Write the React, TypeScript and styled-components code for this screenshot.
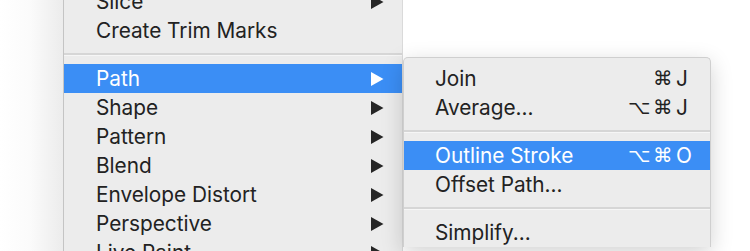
import * as React from 'react';
import styled, { createGlobalStyle } from 'styled-components';

const GlobalStyle = createGlobalStyle`
  html, body {
    margin: 0;
    padding: 0;
    background: #ffffff;
    overflow: hidden;
  }
  body {
    font-family: Inter, "Noto Sans", sans-serif;
  }
`;

type Item =
    | { kind: 'item'; label: string; mods?: string; keyChar?: string; sub?: boolean; active?: boolean }
    | { kind: 'sep' };

const mainItems: Item[] = [
    { kind: 'item', label: 'Slice', sub: true },
    { kind: 'item', label: 'Create Trim Marks' },
    { kind: 'sep' },
    { kind: 'item', label: 'Path', sub: true, active: true },
    { kind: 'item', label: 'Shape', sub: true },
    { kind: 'item', label: 'Pattern', sub: true },
    { kind: 'item', label: 'Blend', sub: true },
    { kind: 'item', label: 'Envelope Distort', sub: true },
    { kind: 'item', label: 'Perspective', sub: true },
    { kind: 'item', label: 'Live Paint', sub: true },
];

const pathItems: Item[] = [
    { kind: 'item', label: 'Join', mods: '⌘', keyChar: 'J' },
    { kind: 'item', label: 'Average...', mods: '⌥⌘', keyChar: 'J' },
    { kind: 'sep' },
    { kind: 'item', label: 'Outline Stroke', mods: '⌥⌘', keyChar: 'O', active: true },
    { kind: 'item', label: 'Offset Path...' },
    { kind: 'sep' },
    { kind: 'item', label: 'Simplify...' },
];

const Arrow = ({ active }: { active?: boolean }) => (
    <svg width="14" height="16" viewBox="0 0 14 16">
        <path d="M1 1 L13.5 8 L1 15 Z" fill={active ? '#ffffff' : '#262626'} />
    </svg>
);

function MenuRows({ items, arrows }: { items: Item[]; arrows: boolean }) {
    return <>
        {items.map((it, i) =>
            it.kind === 'sep'
                ? <Separator key={i} />
                : <Row key={i} active={it.active} indent={arrows ? 32 : 31}>
                    <Label>{it.label}</Label>
                    {arrows
                        ? <ArrowCell>{it.sub && <Arrow active={it.active} />}</ArrowCell>
                        : <>
                            <Mods>{it.mods}</Mods>
                            <KeyChar>{it.keyChar}</KeyChar>
                        </>}
                </Row>
        )}
    </>;
}

export default function App() {
    return <Page>
        <GlobalStyle />
        <Backdrop />
        <MainMenu>
            <MenuRows items={mainItems} arrows />
        </MainMenu>
        <SubMenu>
            <MenuRows items={pathItems} arrows={false} />
        </SubMenu>
    </Page>;
}

const Page = styled.div`
display: flex;
align-items: flex-start;
width: 750px;
height: 251px;
overflow: hidden;
background: #ffffff;
`

const Backdrop = styled.div`
width: 63px;
height: 100%;
flex-shrink: 0;
background: linear-gradient(to right, #ffffff 0px, #fbfbfb 30px, #ececec 62px);
`

const MainMenu = styled.div`
width: 338px;
flex-shrink: 0;
margin-top: -13px;
background: #ececec;
border-left: 1px solid #c4c4c4;
border-right: 1px solid #dadada;
`

const SubMenu = styled.div`
position: relative;
z-index: 1;
width: 306px;
flex-shrink: 0;
margin-top: 57px;
padding-top: 6px;
background: #ececec;
border: 1px solid #cfcfcf;
border-bottom: none;
border-radius: 5px 5px 0 0;
box-shadow: 0 6px 22px rgba(0, 0, 0, 0.18);
`

const Row = styled.div<{ active?: boolean; indent: number }>`
display: grid;
grid-template-columns: 1fr auto 33px;
align-items: center;
height: 29px;
padding-left: ${props => props.indent}px;
padding-right: 2px;
font-size: 20.8px;
letter-spacing: -0.02px;
color: ${props => props.active ? '#ffffff' : '#222222'};
background: ${props => props.active ? '#3b8ef5' : 'transparent'};
`

const Label = styled.span`
white-space: nowrap;
`

const ArrowCell = styled.span`
grid-column: 2 / 4;
display: flex;
justify-content: flex-end;
padding-right: 16px;
`

const Mods = styled.span`
font-family: "DejaVu Sans", sans-serif;
font-size: 19.5px;
letter-spacing: 2.5px;
text-align: right;
`

const KeyChar = styled.span`
padding-left: 1px;
`

const Separator = styled.div`
height: 19px;
display: flex;
align-items: center;

&::after {
    content: '';
    display: block;
    width: 100%;
    height: 2px;
    background: #d6d6d6;
    border-bottom: 1px solid #f6f6f6;
}
`
